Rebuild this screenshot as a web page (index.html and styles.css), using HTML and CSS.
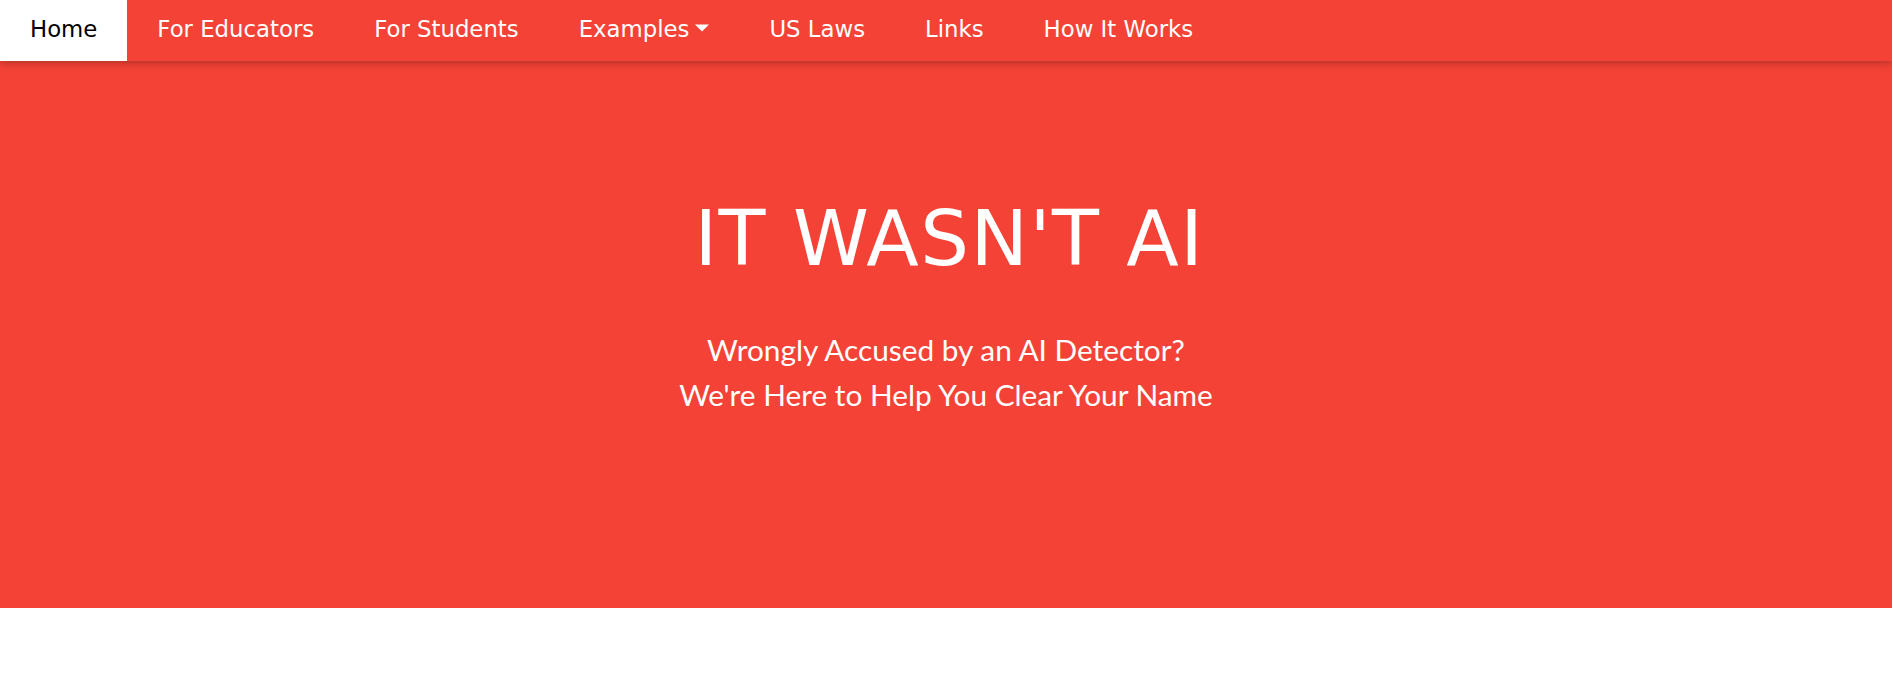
FILE: index.html
```html
<!DOCTYPE html>
<html>
<head>
<meta charset="utf-8">
<title>It Wasn't AI</title>
<link rel="stylesheet" href="styles.css">
</head>
<body>
<div class="topbar">
	<a class="bar-item active" href="#">Home</a>
	<a class="bar-item" href="#">For Educators</a>
	<a class="bar-item" href="#">For Students</a>
	<a class="bar-item" href="#">Examples <svg class="caret" width="14" height="8" viewBox="0 0 14 8"><path d="M0 0.5 L14 0.5 L7 7.5 Z" fill="#fff"/></svg></a>
	<a class="bar-item" href="#">US Laws</a>
	<a class="bar-item" href="#">Links</a>
	<a class="bar-item" href="#">How It Works</a>
</div>

<header class="hero">
	<h1 class="hero-title">IT WASN'T AI</h1>
	<p class="hero-sub">Wrongly Accused by an AI Detector?<br>We're Here to Help You Clear Your Name</p>
</header>
</body>
</html>
```

FILE: styles.css
```css
html, body {
	margin:0px;
	padding:0px;
	background-color:#fff;
	font-family: "Lato", sans-serif;
}

.topbar {
	position:relative;
	z-index:2;
	display:flex;
	height:61px;
	background-color:#f44336;
	box-shadow:0 2px 6px 0 rgba(0,0,0,0.16), 0 2px 12px 0 rgba(0,0,0,0.12);
}

.bar-item {
	display:flex;
	align-items:center;
	padding:0px 30px 3px 30px;
	color:#fff;
	text-decoration:none;
	font-family: "DejaVu Sans", sans-serif;
	font-size:22.8px;
	white-space:nowrap;
}

.bar-item.active {
	background-color:#fff;
	color:#000;
}

.caret {
	margin-left:6px;
	margin-top:-3px;
}

.hero {
	background-color:#f44336;
	color:#fff;
	text-align:center;
	padding:120px 16px 190px 16px;
}

.hero-title {
	margin:0px 0px 32px 0px;
	padding-left:7px;
	font-family: "DejaVu Sans", sans-serif;
	font-weight:normal;
	font-size:76.8px;
	letter-spacing:1.5px;
	line-height:1.5;
}

.hero-sub {
	margin:0px;
	font-family: "Lato", sans-serif;
	font-size:29.8px;
	line-height:1.5;
}
```
